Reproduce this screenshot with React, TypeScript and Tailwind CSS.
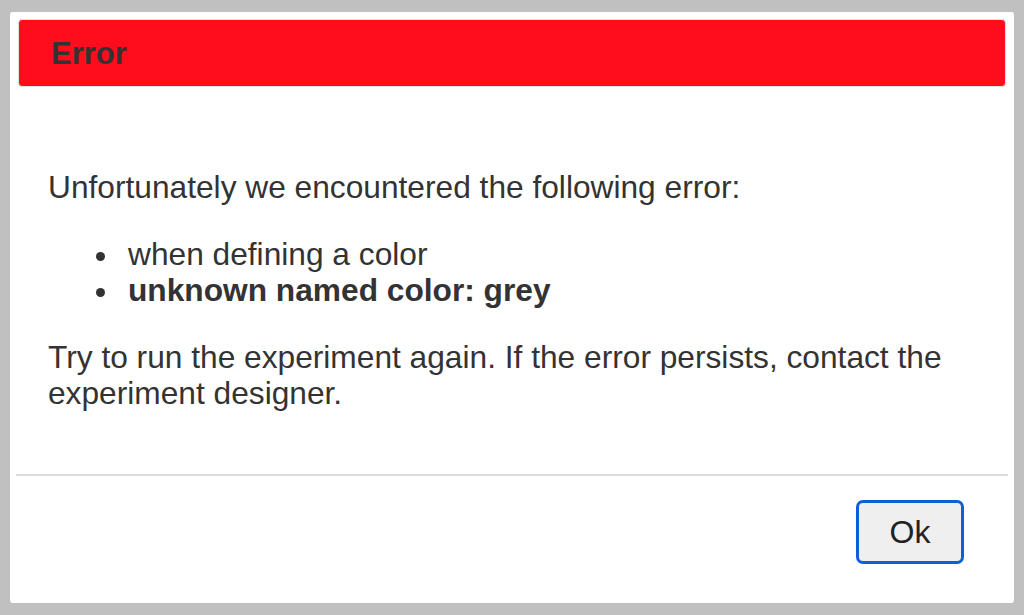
import React from 'react';

const Bullet: React.FC<{ children: React.ReactNode; bold?: boolean }> = ({ children, bold }) => (
  <li className={`flex items-start ${bold ? 'font-bold' : ''}`}>
    <span className="ml-[48px] mr-[23px] mt-[16px] h-[9px] w-[9px] shrink-0 rounded-full bg-[#333333]" />
    <span>{children}</span>
  </li>
);

const App: React.FC = () => {
  return (
    <div className="h-[615px] bg-[#c0c0c0] px-[10px] pt-[12px] pb-[12px] font-['Liberation_Sans',Arial,sans-serif]">
      <div className="flex h-full flex-col rounded-[3px] bg-white">
        <div className="mx-[8px] mt-[7px] flex h-[68px] items-center rounded-[4px] border border-[#dde3e3] bg-[#ff0d1d] px-[32px]">
          <h1 className="text-[31px] font-bold leading-none text-[#333333]">Error</h1>
        </div>

        <div className="flex-1 px-[38px] pt-[82px] text-[31.7px] leading-[36px] text-[#333333]">
          <p className="mb-[31px]">Unfortunately we encountered the following error:</p>
          <ul className="mb-[31px] list-none">
            <Bullet>when defining a color</Bullet>
            <Bullet bold>unknown named color: grey</Bullet>
          </ul>
          <p>Try to run the experiment again. If the error persists, contact the experiment designer.</p>
        </div>

        <div className="mx-[6px] h-[2px] bg-[#dcdcdc]" />

        <div className="flex justify-end pt-[24px] pr-[50px] pb-[39px]">
          <button className="h-[64px] w-[108px] rounded-[7px] border-[3px] border-[#0c5fd4] bg-[#efefef] text-[32px] text-[#222222]">
            Ok
          </button>
        </div>
      </div>
    </div>
  );
};

export default App;
